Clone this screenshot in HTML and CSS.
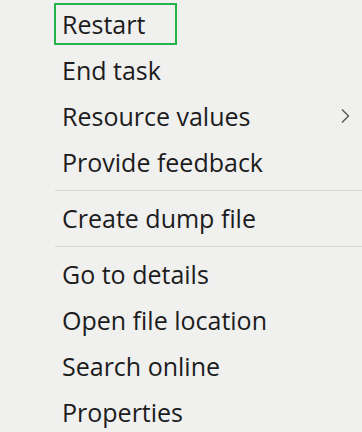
FILE: index.html
```html
<!DOCTYPE html>
<html>
<head>
<meta charset="utf-8">
<link rel="stylesheet" href="styles.css">
</head>
<body>
<ul class="menu">
  <li class="item"><span class="label focused">Restart</span></li>
  <li class="item"><span class="label">End task</span></li>
  <li class="item"><span class="label">Resource values</span>
    <svg class="chev" width="10" height="16" viewBox="0 0 10 16"><path d="M2 1.5 L8.5 8 L2 14.5" fill="none" stroke="#555" stroke-width="1.4"/></svg>
  </li>
  <li class="item"><span class="label">Provide feedback</span></li>
  <li class="sep"></li>
  <li class="item"><span class="label">Create dump file</span></li>
  <li class="sep"></li>
  <li class="item"><span class="label">Go to details</span></li>
  <li class="item"><span class="label">Open file location</span></li>
  <li class="item"><span class="label">Search online</span></li>
  <li class="item"><span class="label">Properties</span></li>
</ul>
</body>
</html>
```
FILE: styles.css
```css
html, body {
  margin: 0;
  padding: 0;
  background: #f0f0ef;
}
body {
  width: 362px;
  height: 432px;
  overflow: hidden;
  font-family: "Open Sans", "Noto Sans", sans-serif;
  font-size: 25px;
  color: #1c1c1c;
}
.menu {
  list-style: none;
  margin: 0;
  padding: 1px 0 0 0;
}
.item {
  height: 46px;
  display: flex;
  align-items: center;
  padding-left: 54px;
  position: relative;
}
.label {
  box-sizing: border-box;
  height: 42px;
  display: flex;
  align-items: center;
  padding-left: 6px;
  border: 2px solid transparent;
  white-space: nowrap;
}
.label.focused {
  border-color: #25b34b;
  width: 123px;
}
.chev {
  margin-left: auto;
  margin-right: 12px;
}
.sep {
  height: 1px;
  background: #d7d7d7;
  margin: 5px 0 4px 55px;
}
```
